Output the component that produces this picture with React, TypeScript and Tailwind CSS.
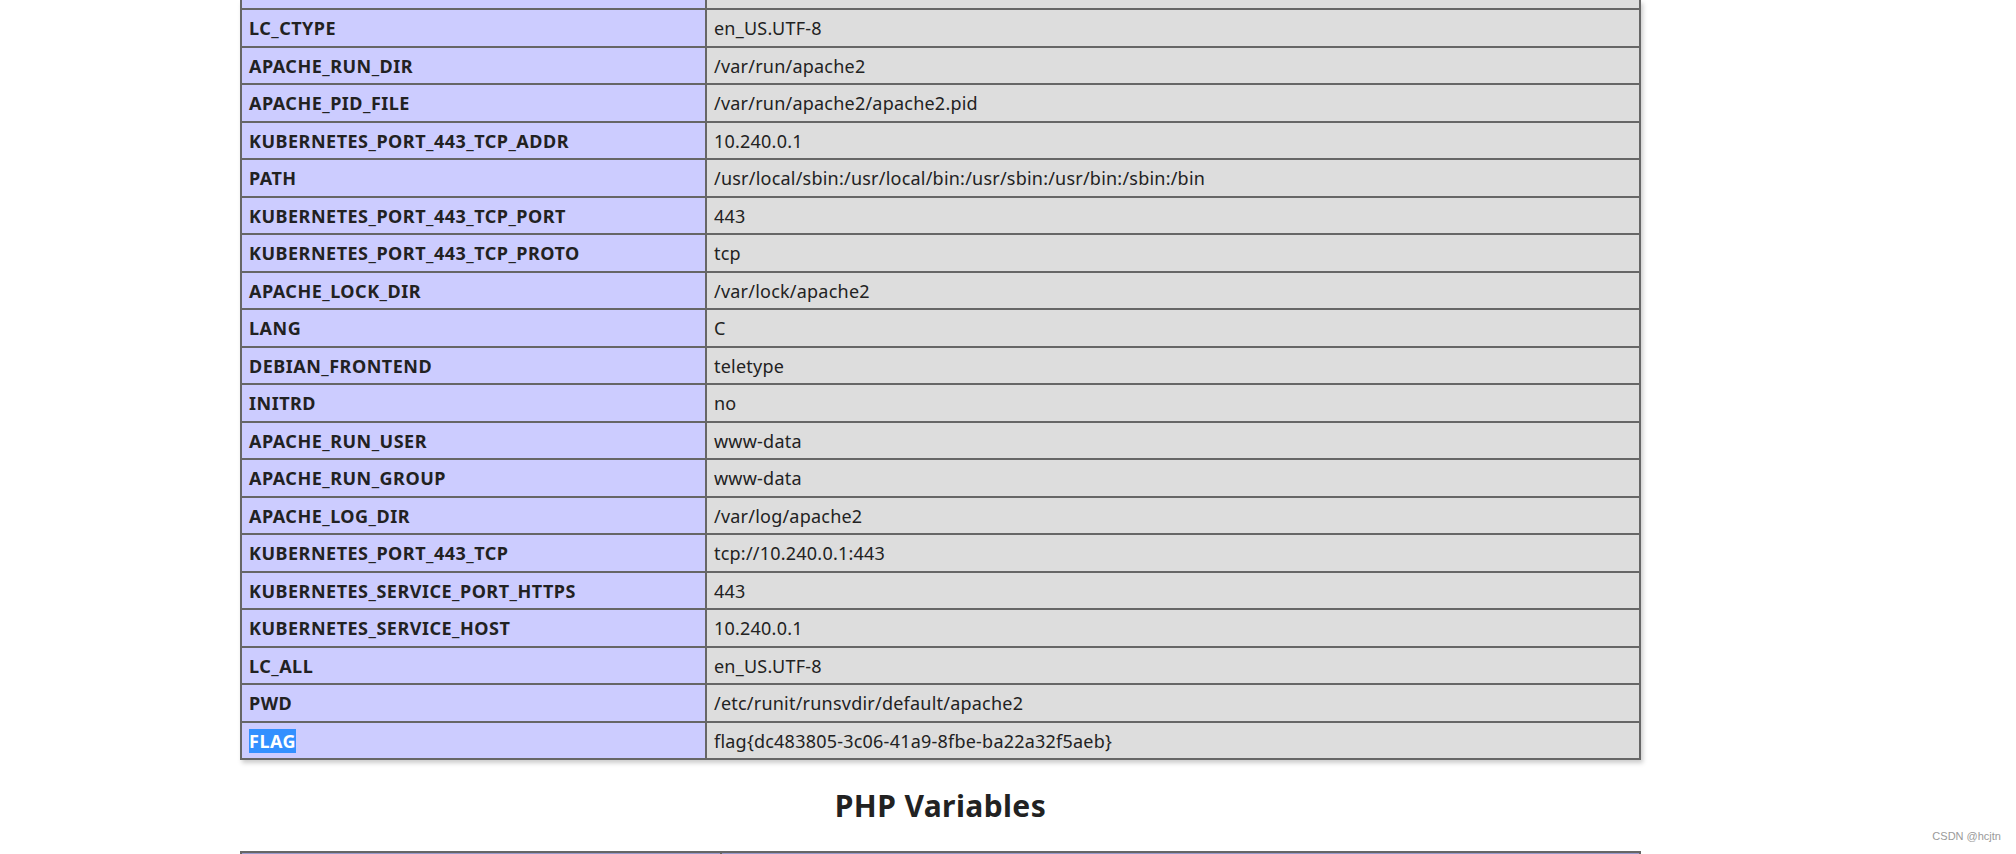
import React from "react";

const rows: [string, string][] = [
  ["LC_CTYPE", "en_US.UTF-8"],
  ["APACHE_RUN_DIR", "/var/run/apache2"],
  ["APACHE_PID_FILE", "/var/run/apache2/apache2.pid"],
  ["KUBERNETES_PORT_443_TCP_ADDR", "10.240.0.1"],
  ["PATH", "/usr/local/sbin:/usr/local/bin:/usr/sbin:/usr/bin:/sbin:/bin"],
  ["KUBERNETES_PORT_443_TCP_PORT", "443"],
  ["KUBERNETES_PORT_443_TCP_PROTO", "tcp"],
  ["APACHE_LOCK_DIR", "/var/lock/apache2"],
  ["LANG", "C"],
  ["DEBIAN_FRONTEND", "teletype"],
  ["INITRD", "no"],
  ["APACHE_RUN_USER", "www-data"],
  ["APACHE_RUN_GROUP", "www-data"],
  ["APACHE_LOG_DIR", "/var/log/apache2"],
  ["KUBERNETES_PORT_443_TCP", "tcp://10.240.0.1:443"],
  ["KUBERNETES_SERVICE_PORT_HTTPS", "443"],
  ["KUBERNETES_SERVICE_HOST", "10.240.0.1"],
  ["LC_ALL", "en_US.UTF-8"],
  ["PWD", "/etc/runit/runsvdir/default/apache2"],
  ["FLAG", "flag{dc483805-3c06-41a9-8fbe-ba22a32f5aeb}"],
];

export default function App() {
  return (
    <div
      className="relative h-[854px] overflow-hidden bg-white text-[#222]"
      style={{ fontFamily: '"Noto Sans", "Open Sans", sans-serif' }}
    >
      <div className="ml-[240px] w-[1401px]">
        <div className="border-x-2 border-b-2 border-[#666] shadow-[1.5px_3px_4.5px_#ccc]">
          <div className="flex h-[8px]">
            <div className="w-[465px] shrink-0 border-r-2 border-[#666] bg-[#ccf]" />
            <div className="flex-1 bg-[#ddd]" />
          </div>
          {rows.map(([k, v]) => (
            <div key={k} className="flex h-[37.5px] border-t-2 border-[#666] text-[18px]">
              <div className="flex w-[465px] shrink-0 items-center border-r-2 border-[#666] bg-[#ccf] pl-[7px] pt-[2px] font-bold tracking-[0.5px]">
                {k === "FLAG" ? (
                  <span className="bg-[#3390ff] leading-[24px] text-white">{k}</span>
                ) : (
                  k
                )}
              </div>
              <div className="flex flex-1 items-center bg-[#ddd] pl-[7px] pt-[2px] tracking-[0.22px]">{v}</div>
            </div>
          ))}
        </div>
        <div className="flex h-[91px] items-center justify-center text-[30px] font-bold tracking-[0.4px]">
          PHP Variables
        </div>
        <div className="border-x-2 border-t-2 border-[#666]">
          <div className="flex h-[40px]">
            <div className="w-[480px] shrink-0 border-r-2 border-[#666] bg-[#99c]" />
            <div className="flex-1 bg-[#99c]" />
          </div>
        </div>
      </div>
      <div
        className="absolute bottom-[10px] right-[15px] text-[11px] text-[#9a9a9a]"
        style={{ fontFamily: '"Liberation Sans", Arial, sans-serif' }}
      >
        CSDN @hcjtn
      </div>
    </div>
  );
}
